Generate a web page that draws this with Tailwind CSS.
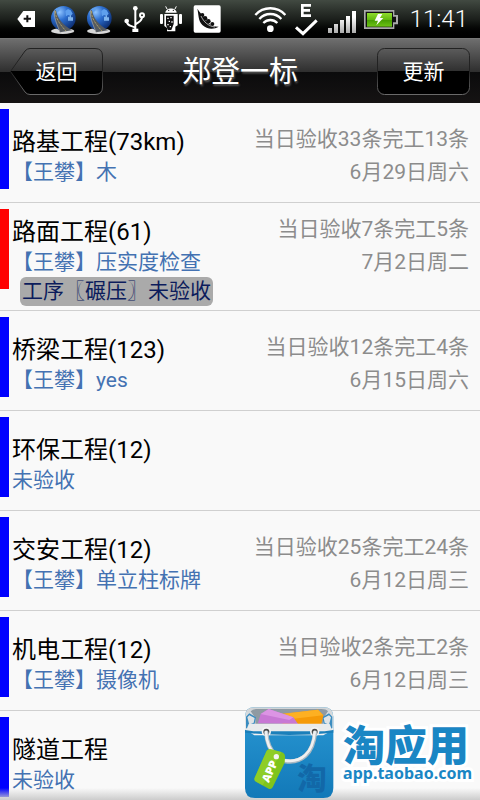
<!DOCTYPE html>
<html lang="zh-CN">
  <head>
    <meta charset="UTF-8" />
    <meta name="viewport" content="width=device-width, initial-scale=1.0" />
    <title>郑登一标</title>
    <script src="https://cdn.jsdelivr.net/npm/@tailwindcss/browser@4"></script>
  </head>
  <body class="relative h-screen overflow-hidden flex flex-col bg-[#f9f9f9] font-[Roboto,'Noto_Sans_CJK_SC',sans-serif] text-[21px] leading-[30px]">

    <!-- Status bar -->
    <div class="h-[38px] shrink-0 flex items-center justify-between pl-[13px] pr-3 bg-linear-to-b from-[#424a42] via-[#1c201c] to-black">
      <div class="flex gap-2">
        <svg class="w-7 h-[38px]" viewBox="39 0 84 114">
          <path d="M52 57 L70 33 H105 V81 H70 Z" fill="#fff" />
          <path d="M82 46 V67 M71 56 H93" stroke="#111" stroke-width="6" />
        </svg>
        <svg class="w-7 h-[38px]" viewBox="147 0 84 114">
          <defs>
            <radialGradient id="sea" cx="0.35" cy="0.25" r="0.8">
              <stop offset="0" stop-color="#8fc4ff" />
              <stop offset="0.4" stop-color="#2d6fd0" />
              <stop offset="1" stop-color="#0a2a6c" />
            </radialGradient>
            <g id="globe">
              <ellipse cx="188" cy="93" rx="35" ry="9" fill="#d8d8d8" />
              <circle cx="190" cy="55" r="37" fill="url(#sea)" />
              <path d="M196 33 l8 -6 8 4 6 10 -6 6 -8 -2 -6 4z M160 36 l8 -10 14 -4 -4 10 -10 8z" fill="#5fa0ee" />
              <path d="M204 62 V50 H209 V46 H213 V52 H219 V62 Z" fill="#7fb4ee" />
              <path d="M164 31 C160 50 170 70 180 97 L216 91 C190 76 172 56 168 31 Z" fill="#555a60" />
              <path d="M166 33 C166 54 180 74 198 93" fill="none" stroke="#d8c060" stroke-width="2" stroke-dasharray="8 3" />
              <path d="M164 31 C160 50 170 70 180 97" fill="none" stroke="#aaa" stroke-width="2" />
            </g>
          </defs>
          <use href="#globe" />
        </svg>
        <svg class="w-7 h-[38px]" viewBox="147 0 84 114">
          <use href="#globe" />
        </svg>
        <svg class="w-7 h-[38px]" viewBox="363 0 84 114" fill="none" stroke="#fff" stroke-width="6">
          <path d="M406 26 V90 M406 84 C398 76 381 80 380 64 M406 74 C412 66 426 66 426 50" />
          <circle cx="426" cy="46" r="6" />
          <circle cx="406" cy="25" r="7" fill="#fff" stroke="none" />
          <circle cx="380" cy="63" r="7" fill="#fff" stroke="none" />
          <path d="M397 86 H415 V96 H397 Z" fill="#fff" stroke="none" />
        </svg>
        <svg class="w-7 h-[38px]" viewBox="471 0 84 114" fill="#fff">
          <path d="M496 38 C497 21 529 21 530 38 Z" />
          <path d="M501 27 L497 19 M525 27 L529 19" stroke="#fff" stroke-width="3" />
          <circle cx="506" cy="31" r="2" fill="#111" />
          <circle cx="520" cy="31" r="2" fill="#111" />
          <rect x="480" y="42" width="9" height="30" rx="3" />
          <rect x="537" y="42" width="9" height="30" rx="3" />
          <path d="M493 42 H533 V76 L526 80 V94 H501 V84 L493 78 Z" />
          <path d="M498 47 H521 V72 L514 90 H503 L498 74 Z" fill="#111" />
          <path d="M502 53 h4 v4 h-4z M511 51 h4 v4 h-4z M506 62 h4 v4 h-4z M514 64 h4 v4 h-4z M502 72 h4 v4 h-4z M509 78 h4 v4 h-4z" />
        </svg>
        <svg class="w-7 h-[38px]" viewBox="579 0 84 114">
          <rect x="581" y="16" width="81" height="82" rx="5" fill="#fff" />
          <path d="M592 26 C600 38 604 40 608 48 C618 68 632 80 656 80 C642 89 620 88 607 75 C594 62 596 42 592 26 Z" fill="#111" />
          <g fill="#111">
            <circle cx="607" cy="45" r="6" />
            <circle cx="615" cy="55" r="7" />
            <circle cx="625" cy="64" r="7" />
            <circle cx="637" cy="72" r="6" />
          </g>
          <path d="M603 48 C611 66 626 79 645 81" fill="none" stroke="#fff" stroke-width="2" />
        </svg>
      </div>

      <div class="flex items-center gap-2">
        <svg class="w-8 h-[38px]" viewBox="42 0 96 114" fill="none" stroke="#fff" stroke-width="7">
          <path d="M46 45 C70 18 112 18 136 45 M58 57 C76 37 106 37 124 57 M70 69 C82 57 100 57 112 69" />
          <circle cx="91" cy="86" r="10" fill="#fff" stroke="none" />
        </svg>
        <svg class="w-6 h-[38px]" viewBox="162 0 72 114" fill="none" stroke="#fff">
          <path d="M213 16 H187 V47 H213 M187 31 H210" stroke-width="8" />
          <path d="M168 82 L189 101 L230 61" stroke-width="9" />
        </svg>
        <svg class="w-[30px] h-[38px]" viewBox="258 0 90 114">
          <linearGradient id="bars" x1="0" y1="30" x2="0" y2="100" gradientUnits="userSpaceOnUse">
            <stop offset="0.3" stop-color="#fff" />
            <stop offset="1" stop-color="#aaa" />
          </linearGradient>
          <path d="M264 84 h12 v15 h-12z M282 72 h12 v27 h-12z M300 60 h12 v39 h-12z M318 48 h12 v51 h-12z M336 33 h12 v66 h-12z" fill="url(#bars)" />
        </svg>
        <svg class="w-[38px] h-[38px]" viewBox="372 0 114 114">
          <linearGradient id="charge" x1="0" y1="0" x2="0" y2="1">
            <stop offset="0" stop-color="#8fdc2c" />
            <stop offset="0.5" stop-color="#62b80e" />
            <stop offset="0.5" stop-color="#469a04" />
            <stop offset="1" stop-color="#6cc414" />
          </linearGradient>
          <path d="M372 30 H463 V45 H474 V73 H463 V87 H372 Z" fill="#aaa" />
          <path d="M377 35 H459 V50 H468 V67 H459 V82 H377 Z" fill="#111" />
          <rect x="381" y="39" width="75" height="41" fill="url(#charge)" />
          <path d="M414 42 H427 L420 54 H430 L409 76 L414 62 H404 Z" fill="#fff" />
        </svg>
        <span class="text-2xl font-light text-white">11:41</span>
      </div>
    </div>

    <!-- Title bar -->
    <header class="h-[65px] shrink-0 flex items-center justify-between px-[10px] pt-px border-t border-[#777] text-white bg-[linear-gradient(#6e6e6e,#2e2e2e_33px,#0b0b0c_33px,#151313)]">
      <button class="relative w-[93px] h-[47px]">
        <svg class="absolute inset-0 w-full h-full" viewBox="0 0 93 47">
          <linearGradient id="edge" x1="0" y1="0" x2="0" y2="1">
            <stop offset="0" stop-color="#222" />
            <stop offset="0.5" stop-color="#222" />
            <stop offset="1" stop-color="#6a6a6a" />
          </linearGradient>
          <linearGradient id="fill" x1="0" y1="0" x2="0" y2="1">
            <stop offset="0.48" stop-color="#000" stop-opacity="0" />
            <stop offset="0.48" stop-color="#000" />
          </linearGradient>
          <path d="M0.5 23.5 L15 3 Q17 0.5 20 0.5 H85 Q92.500 0.500 92.500 8 V39 Q92.500 46.500 85 46.500 H20 Q17 46.500 15 44 Z" fill="url(#fill)" stroke="url(#edge)" />
        </svg>
        <span class="relative">返回</span>
      </button>
      <h1 class="text-[29px] [text-shadow:1px_2px_2px_#555]">郑登一标</h1>
      <button class="relative w-[93px] h-[47px]">
        <svg class="absolute inset-0 w-full h-full" viewBox="0 0 93 47">
          <rect x="0.5" y="0.5" width="92" height="46" rx="7" fill="url(#fill)" stroke="url(#edge)" />
        </svg>
        <span class="relative">更新</span>
      </button>
    </header>

    <!-- Project list -->
    <ul class="text-[#4472b2]">
      <li class="min-h-[100px] flex border-b border-[#d0d0d0]">
        <div class="w-[9px] h-20 mt-1.5 mr-[3px] bg-[#0000ff]"></div>
        <div class="flex-1 self-center pt-2">
          <h2 class="text-2xl leading-[30px] text-black">路基工程(73km)</h2>
          <p>【王攀】木</p>
        </div>
        <div class="self-center pt-[7px] pr-[11px] text-right text-[#8c8c8c] leading-[33px]">
          <p>当日验收33条完工13条</p>
          <p>6月29日周六</p>
        </div>
      </li>

      <li class="min-h-[108px] flex border-b border-[#d0d0d0]">
        <div class="w-[9px] h-20 mt-1.5 mr-[3px] bg-[#ff0000]"></div>
        <div class="flex-1 self-center pt-[10px]">
          <h2 class="text-2xl leading-[30px] text-black">路面工程(61)</h2>
          <p>【王攀】压实度检查</p>
          <p class="w-fit ml-2 px-0.5 rounded-md bg-[#aaa] text-[#0c1c5c] leading-[29px]">工序〖碾压〗未验收</p>
        </div>
        <div class="pt-[10px] pr-[11px] text-right text-[#8c8c8c] leading-[33px]">
          <p>当日验收7条完工5条</p>
          <p>7月2日周二</p>
        </div>
      </li>

      <li class="min-h-[100px] flex border-b border-[#d0d0d0]">
        <div class="w-[9px] h-20 mt-1.5 mr-[3px] bg-[#0000ff]"></div>
        <div class="flex-1 self-center pt-2">
          <h2 class="text-2xl leading-[30px] text-black">桥梁工程(123)</h2>
          <p>【王攀】yes</p>
        </div>
        <div class="self-center pt-[7px] pr-[11px] text-right text-[#8c8c8c] leading-[33px]">
          <p>当日验收12条完工4条</p>
          <p>6月15日周六</p>
        </div>
      </li>

      <li class="min-h-[100px] flex border-b border-[#d0d0d0]">
        <div class="w-[9px] h-20 mt-1.5 mr-[3px] bg-[#0000ff]"></div>
        <div class="flex-1 self-center pt-2">
          <h2 class="text-2xl leading-[30px] text-black">环保工程(12)</h2>
          <p>未验收</p>
        </div>
      </li>

      <li class="min-h-[100px] flex border-b border-[#d0d0d0]">
        <div class="w-[9px] h-20 mt-1.5 mr-[3px] bg-[#0000ff]"></div>
        <div class="flex-1 self-center pt-2">
          <h2 class="text-2xl leading-[30px] text-black">交安工程(12)</h2>
          <p>【王攀】单立柱标牌</p>
        </div>
        <div class="self-center pt-[7px] pr-[11px] text-right text-[#8c8c8c] leading-[33px]">
          <p>当日验收25条完工24条</p>
          <p>6月12日周三</p>
        </div>
      </li>

      <li class="min-h-[100px] flex border-b border-[#d0d0d0]">
        <div class="w-[9px] h-20 mt-1.5 mr-[3px] bg-[#0000ff]"></div>
        <div class="flex-1 self-center pt-2">
          <h2 class="text-2xl leading-[30px] text-black">机电工程(12)</h2>
          <p>【王攀】摄像机</p>
        </div>
        <div class="self-center pt-[7px] pr-[11px] text-right text-[#8c8c8c] leading-[33px]">
          <p>当日验收2条完工2条</p>
          <p>6月12日周三</p>
        </div>
      </li>

      <li class="min-h-[100px] flex">
        <div class="w-[9px] h-20 mt-1.5 mr-[3px] bg-[#0000ff]"></div>
        <div class="flex-1 self-center pt-2">
          <h2 class="text-2xl leading-[30px] text-black">隧道工程</h2>
          <p>未验收</p>
        </div>
      </li>
    </ul>

    <!-- Fading edge -->
    <div class="absolute inset-x-0 bottom-0 h-3 bg-linear-to-b from-[#f0f0f0]/0 to-[#cccccc]"></div>

    <!-- App store badge -->
    <div class="absolute bottom-0 right-2 flex items-center gap-2">
      <svg class="w-[92px] h-[95px]" viewBox="21 15 276 285">
        <defs>
          <linearGradient id="bag" x1="0" y1="0" x2="0" y2="1">
            <stop offset="0" stop-color="#2a98d4" />
            <stop offset="1" stop-color="#1279b8" />
          </linearGradient>
          <linearGradient id="rim" x1="0" y1="0" x2="0" y2="1">
            <stop offset="0" stop-color="#cfd3d6" />
            <stop offset="1" stop-color="#f2f2f2" />
          </linearGradient>
        </defs>
        <path d="M27 50 Q27 22 56 22 H262 Q292 22 292 50 V264 Q292 294 262 294 H57 Q27 294 27 264 Z" fill="url(#bag)" />
        <path d="M27 50 Q27 22 56 22 H262 Q292 22 292 50 V88 Q292 94 284 94 L262 106 H55 L36 94 Q27 94 27 88 Z" fill="url(#rim)" />
        <path d="M44 34 Q50 27 62 27 H256 Q270 27 276 34 L262 54 V74 H58 V54 Z" fill="#8f9aa2" />
        <path d="M30 50 L40 40 L60 52 L56 72 L36 88 L30 84 Z M289 50 L279 40 L259 52 L263 72 L283 88 L289 84 Z" fill="#3a8cc0" />
        <path d="M34 52 L40 46 L56 54 L53 68 L40 74 Z M285 52 L279 46 L263 54 L266 68 L279 74 Z" fill="#dfe3e5" />
        <path d="M136 42 L246 29 L262 46 L256 72 H140 Z" fill="#f59a08" />
        <path d="M136 42 L246 29 L262 46 L160 58 Z" fill="#fdb022" />
        <path d="M66 70 L74 42 L98 27 L172 52 L186 72 Z" fill="#c878d4" />
        <path d="M74 42 L98 27 L172 52 L160 60 Z" fill="#dc94e4" />
        <path d="M38 72 L58 71 H262 L281 72 L287 88 L264 94 H54 L32 88 Z" fill="#e9ebec" />
        <path d="M27 90 L52 94 H266 L292 90 V98 Q160 112 27 98 Z" fill="#1b7fba" />
        <g>
          <circle cx="91" cy="95" r="14" fill="#f4f4f4" />
          <circle cx="91" cy="95" r="9" fill="#4a4a4a" />
          <circle cx="236" cy="95" r="14" fill="#f4f4f4" />
          <circle cx="236" cy="95" r="9" fill="#4a4a4a" />
        </g>
        <text x="184" y="266" font-family="Noto Sans CJK SC" font-size="88" font-weight="900" fill="#1268a8">淘</text>
        <path d="M91 98 C92 130 102 150 122 170 M146 183 C196 192 232 160 237 98" fill="none" stroke="#a9b8c2" stroke-width="13" stroke-linecap="round" />
        <path d="M90 96 C91 130 101 150 121 168 M146 181 C196 190 231 158 236 96" fill="none" stroke="#f0f0f0" stroke-width="8" stroke-linecap="round" />
        <path d="M92 152 Q96 146 104 148 L136 156 Q148 160 147 172 L146 188 L110 262 Q106 269 98 266 L60 245 Q53 241 56 233 Z" fill="#7fc41c" />
        <path d="M92 152 Q96 146 104 148 L136 156 L80 256 L60 245 Q53 241 56 233 Z" fill="#97d42e" opacity="0.6" />
        <circle cx="121" cy="170" r="8" fill="#f4f4f4" />
        <text x="98" y="250" transform="rotate(-66 98 250)" font-family="Open Sans" font-size="34" font-weight="800" fill="#fff">APP</text>
      </svg>
      <div class="pt-2 text-[#1a86c4] [-webkit-text-stroke:6px_white] [paint-order:stroke_fill]">
        <p class="text-[42px] leading-8 font-black">淘应用</p>
        <p class="font-['Noto_Sans'] text-base leading-5 font-bold">app.taobao.com</p>
      </div>
    </div>
  </body>
</html>
